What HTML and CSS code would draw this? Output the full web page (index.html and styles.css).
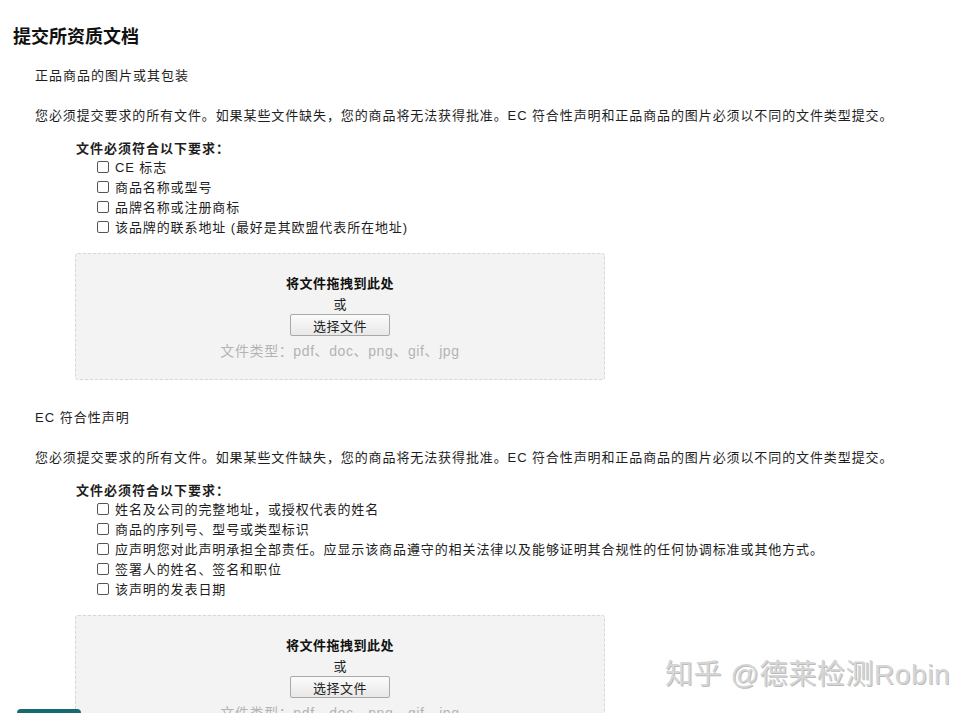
FILE: index.html
```html
<!DOCTYPE html>
<html lang="zh-CN">
<head>
<meta charset="utf-8">
<title>提交所资质文档</title>
<link rel="stylesheet" href="styles.css">
</head>
<body>
<h1 class="title">提交所资质文档</h1>

<section class="doc">
  <div class="doc-name">正品商品的图片或其包装</div>
  <p class="doc-note">您必须提交要求的所有文件。如果某些文件缺失，您的商品将无法获得批准。EC 符合性声明和正品商品的图片必须以不同的文件类型提交。</p>
  <div class="reqs">
    <div class="reqs-head">文件必须符合以下要求：</div>
    <ul class="req-list">
      <li><span class="box"></span>CE 标志</li>
      <li><span class="box"></span>商品名称或型号</li>
      <li><span class="box"></span>品牌名称或注册商标</li>
      <li><span class="box"></span>该品牌的联系地址 (最好是其欧盟代表所在地址)</li>
    </ul>
  </div>
  <div class="drop">
    <div class="drop-title">将文件拖拽到此处</div>
    <div class="drop-or">或</div>
    <button class="pick" type="button">选择文件</button>
    <div class="types">文件类型：pdf、doc、png、gif、jpg</div>
  </div>
</section>

<section class="doc doc-second">
  <div class="doc-name">EC 符合性声明</div>
  <p class="doc-note">您必须提交要求的所有文件。如果某些文件缺失，您的商品将无法获得批准。EC 符合性声明和正品商品的图片必须以不同的文件类型提交。</p>
  <div class="reqs">
    <div class="reqs-head">文件必须符合以下要求：</div>
    <ul class="req-list">
      <li><span class="box"></span>姓名及公司的完整地址，或授权代表的姓名</li>
      <li><span class="box"></span>商品的序列号、型号或类型标识</li>
      <li><span class="box"></span>应声明您对此声明承担全部责任。应显示该商品遵守的相关法律以及能够证明其合规性的任何协调标准或其他方式。</li>
      <li><span class="box"></span>签署人的姓名、签名和职位</li>
      <li><span class="box"></span>该声明的发表日期</li>
    </ul>
  </div>
  <div class="drop">
    <div class="drop-title">将文件拖拽到此处</div>
    <div class="drop-or">或</div>
    <button class="pick" type="button">选择文件</button>
    <div class="types">文件类型：pdf、doc、png、gif、jpg</div>
  </div>
</section>

<div class="watermark">知乎 @德莱检测Robin</div>
<div class="teal-tab"></div>
</body>
</html>
```

FILE: styles.css
```css
html, body {
  margin: 0;
  padding: 0;
  background: #ffffff;
}
body {
  font-family: "Liberation Sans", "Noto Sans CJK SC", sans-serif;
  font-size: 13px;
  color: #1e1e1e;
  width: 976px;
  height: 713px;
  overflow: hidden;
  position: relative;
}
.title {
  margin: 0;
  padding: 25px 0 0 13px;
  font-size: 18px;
  line-height: 24px;
  font-weight: bold;
  color: #111;
}
.doc {
  padding-left: 35px;
  margin-top: 17px;
}
.doc-second {
  margin-top: 28px;
}
.doc-name {
  line-height: 20px;
  letter-spacing: 1px;
}
.doc-note {
  margin: 20px 0 0 0;
  line-height: 20px;
  letter-spacing: 0.9px;
}
.reqs {
  margin-left: 41px;
  margin-top: 14px;
}
.reqs-head {
  font-weight: bold;
  line-height: 18px;
  letter-spacing: 1px;
}
.req-list {
  list-style: none;
  margin: 0;
  padding: 0 0 0 21px;
}
.req-list li {
  display: flex;
  align-items: center;
  line-height: 20px;
  height: 20px;
  letter-spacing: 0.9px;
}
.box {
  width: 10px;
  height: 10px;
  border: 1px solid #555;
  border-radius: 2px;
  background: #fff;
  margin-right: 6px;
  flex: none;
  position: relative;
  top: -1px;
}
.drop {
  margin: 15px 0 0 40px;
  width: 528px;
  height: 125px;
  background: #f3f3f3;
  border: 1px dashed #d6d6d6;
  border-radius: 3px;
  display: flex;
  flex-direction: column;
  align-items: center;
  box-sizing: content-box;
}
.drop-title {
  margin-top: 20px;
  font-weight: bold;
  line-height: 20px;
  letter-spacing: 0.5px;
  color: #111;
}
.drop-or {
  line-height: 20px;
  margin-top: 1px;
}
.pick {
  margin-top: -1px;
  width: 100px;
  height: 22px;
  padding: 0;
  font-family: "Liberation Sans", "Noto Sans CJK SC", sans-serif;
  font-size: 13px;
  color: #222;
  background: linear-gradient(#fbfbfb, #e8e8e8);
  border: 1px solid #a9a9a9;
  border-radius: 2px;
  letter-spacing: 0.5px;
}
.types {
  margin-top: 5px;
  line-height: 20px;
  color: #b3b3b3;
  font-size: 14px;
  letter-spacing: 0.6px;
}
.watermark {
  position: absolute;
  left: 665px;
  top: 656px;
  font-family: "Liberation Sans", "Noto Sans CJK SC", sans-serif;
  font-size: 28px;
  line-height: 38px;
  color: #d6d6d6;
  text-shadow: 1px 1px 0 #bcbcbc;
  letter-spacing: 0.6px;
  white-space: nowrap;
}
.teal-tab {
  position: absolute;
  left: 17px;
  top: 709px;
  width: 64px;
  height: 10px;
  background: #176a72;
  border-radius: 4px 4px 0 0;
}
```
